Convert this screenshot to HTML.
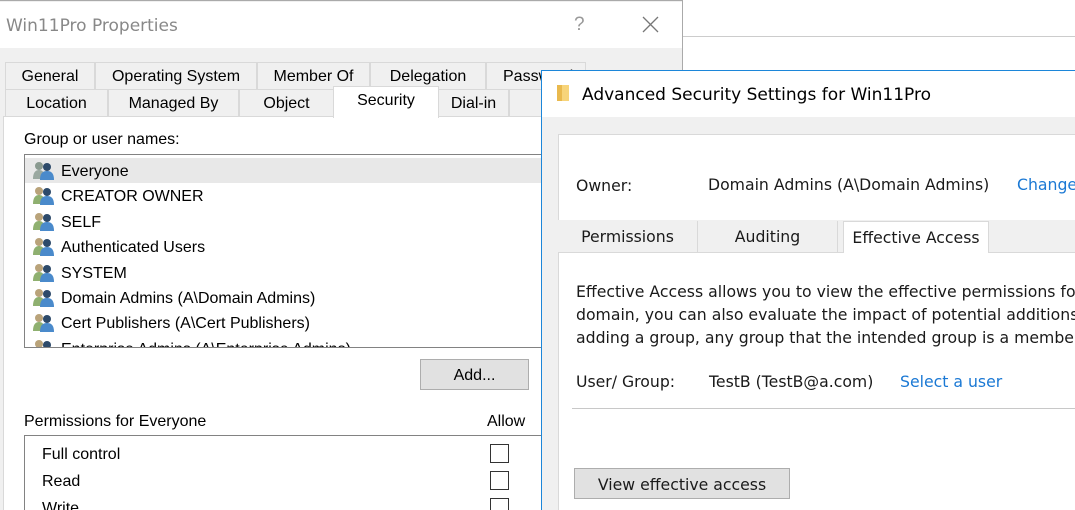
<!DOCTYPE html>
<html><head><meta charset="utf-8"><style>
*{margin:0;padding:0;box-sizing:border-box}
html,body{width:1075px;height:510px;overflow:hidden}
body{background:#fff;position:relative;font-family:"Liberation Sans",sans-serif;color:#000}
.a{position:absolute}
.t{position:absolute;white-space:nowrap;font-size:16px}
.tab{position:absolute;background:#f0f0f0;border:1px solid #d9d9d9;border-bottom:none;font-size:16px;text-align:center;line-height:28px}
.row{position:absolute;left:8px;height:25px;font-size:16px;line-height:27px;padding-left:28px;white-space:nowrap}
.row svg{position:absolute;left:0;top:3px}
.cb{position:absolute;left:490px;width:19px;height:19px;border:1px solid #333;background:#fff}
.s{font-family:"DejaVu Sans","Liberation Sans",sans-serif;font-size:15.7px;color:#1a1a1a}
</style></head><body>
<div class="a" style="left:682px;top:36px;width:393px;height:1px;background:#ccc"></div>
<div class="a" style="left:0;top:0;width:683px;height:510px;background:#f0f0f0;border-top:1px solid #aaa;border-right:1px solid #aaa"></div>
<div class="a" style="left:0;top:2px;width:682px;height:46px;background:#fff"></div>
<div class="t s" style="left:6px;top:16px;font-size:17px;color:#888">Win11Pro Properties</div>
<div class="t" style="left:574px;top:14px;font-size:19px;color:#999">?</div>
<svg class="a" style="left:642px;top:16px" width="17" height="17"><path d="M1 1L16 16M16 1L1 16" stroke="#777" stroke-width="1.3"/></svg>
<div class="tab" style="left:5px;top:62px;width:90px;height:28px">General</div>
<div class="tab" style="left:95px;top:62px;width:162px;height:28px">Operating System</div>
<div class="tab" style="left:257px;top:62px;width:113px;height:28px">Member Of</div>
<div class="tab" style="left:370px;top:62px;width:116px;height:28px">Delegation</div>
<div class="tab" style="left:486px;top:62px;width:100px;height:28px;text-align:left;padding-left:16px">Password Replication</div>
<div class="tab" style="left:5px;top:89px;width:103px;height:28px">Location</div>
<div class="tab" style="left:108px;top:89px;width:131px;height:28px">Managed By</div>
<div class="tab" style="left:239px;top:89px;width:95px;height:28px">Object</div>
<div class="tab" style="left:438px;top:89px;width:71px;height:28px">Dial-in</div>
<div class="tab" style="left:509px;top:89px;width:40px;height:28px"></div>
<div class="a" style="left:3px;top:116px;width:560px;height:394px;background:#fff;border:1px solid #d9d9d9;border-bottom:none"></div>
<div class="tab" style="left:333px;top:86px;width:106px;height:32px;background:#fff;line-height:28px;border-color:#d9d9d9">Security</div>
<div class="t" style="left:24px;top:131px">Group or user names:</div>
<div class="a" style="left:24px;top:154px;width:530px;height:194px;border:1px solid #828282;background:#fff;overflow:hidden">
<div class="a" style="left:0;top:3px;width:530px;height:25px;background:#e8e8e8"></div>
<div id="rows"></div>
</div>
<div class="a" style="left:420px;top:359px;width:109px;height:31px;background:#e1e1e1;border:1px solid #adadad;font-size:16px;text-align:center;line-height:31px">Add...</div>
<div class="t" style="left:24px;top:413px">Permissions for Everyone</div>
<div class="t" style="left:487px;top:413px">Allow</div>
<div class="a" style="left:24px;top:435px;width:530px;height:75px;border:1px solid #828282;border-bottom:none;background:#fff"></div>
<div class="t" style="left:42px;top:446px">Full control</div>
<div class="t" style="left:42px;top:473px">Read</div>
<div class="t" style="left:42px;top:500px">Write</div>
<div class="cb" style="top:444px"></div>
<div class="cb" style="top:471px"></div>
<div class="cb" style="top:498px"></div>
<!-- right dialog -->
<div class="a" style="left:541px;top:70px;width:534px;height:440px;background:#f0f0f0;border:1px solid #1c86d9;border-right:none;border-bottom:none"></div>
<div class="a" style="left:542px;top:71px;width:533px;height:46px;background:#fff"></div>
<svg class="a" style="left:557px;top:85px" width="12" height="16"><rect x="0" y="0" width="12" height="16" fill="#f7d47a"/><rect x="0" y="0" width="5" height="16" fill="#e9b94e"/></svg>
<div class="t s" style="left:582px;top:85px;font-size:17px;color:#000">Advanced Security Settings for Win11Pro</div>
<div class="a" style="left:558px;top:134px;width:517px;height:376px;background:#fff;border:1px solid #d9d9d9;border-right:none;border-bottom:none"></div>
<div class="t s" style="left:576px;top:176px">Owner:</div>
<div class="t s" style="left:708px;top:175px">Domain Admins (A\Domain Admins)</div>
<div class="t s" style="left:1017px;top:175px;color:#1a78d4">Change</div>
<div class="a" style="left:558px;top:220px;width:517px;height:33px;background:#f0f0f0;border-bottom:1px solid #d9d9d9"></div>
<div class="a s" style="left:558px;top:221px;width:140px;height:32px;border-right:1px solid #d9d9d9;text-align:center;line-height:31px">Permissions</div>
<div class="a s" style="left:698px;top:221px;width:140px;height:32px;border-right:1px solid #d9d9d9;text-align:center;line-height:31px">Auditing</div>
<div class="a s" style="left:843px;top:221px;width:146px;height:33px;background:#fff;border:1px solid #d9d9d9;border-bottom:none;text-align:center;line-height:31px">Effective Access</div>
<div class="a" style="left:558px;top:253px;width:517px;height:257px;background:#fff;border-left:1px solid #d9d9d9;overflow:hidden">
<div class="t s" style="left:17px;top:27px;line-height:23px">Effective Access allows you to view the effective permissions for a user, group, or device account. If the account is a member of a<br>domain, you can also evaluate the impact of potential additions to the security token for the account. When you evaluate the impact of<br>adding a group, any group that the intended group is a member of will also be evaluated.</div>
</div>
<div class="t s" style="left:576px;top:372px">User/ Group:</div>
<div class="t s" style="left:709px;top:372px">TestB (TestB@a.com)</div>
<div class="t s" style="left:900px;top:372px;color:#1a78d4">Select a user</div>
<div class="a" style="left:572px;top:408px;width:503px;height:1px;background:#c8c8c8"></div>
<div class="a s" style="left:574px;top:468px;width:216px;height:31px;background:#e1e1e1;border:1px solid #adadad;text-align:center;line-height:31px">View effective access</div>
<script>
var n=["Everyone","CREATOR OWNER","SELF","Authenticated Users","SYSTEM","Domain Admins (A\\Domain Admins)","Cert Publishers (A\\Cert Publishers)","Enterprise Admins (A\\Enterprise Admins)"];
var h="";
n.forEach(function(x,i){var b=i==0?"#8a9a90":"#b9a37a";h+='<div class="row" style="top:'+(3+i*25.4)+'px"><svg width="22" height="19"><circle cx="6" cy="5" r="4" fill="'+b+'"/><path d="M0 18C0 11 3 9 6 9S12 11 12 18Z" fill="'+(i==0?"#9aa8a0":"#8fb070")+'"/><circle cx="14" cy="6" r="4" fill="#2d4a6a"/><path d="M7 19C7 12 10 10 14 10S21 12 21 19Z" fill="#4a8acb"/></svg>'+x+'</div>';});
document.getElementById("rows").innerHTML=h;
</script>
</body></html>
